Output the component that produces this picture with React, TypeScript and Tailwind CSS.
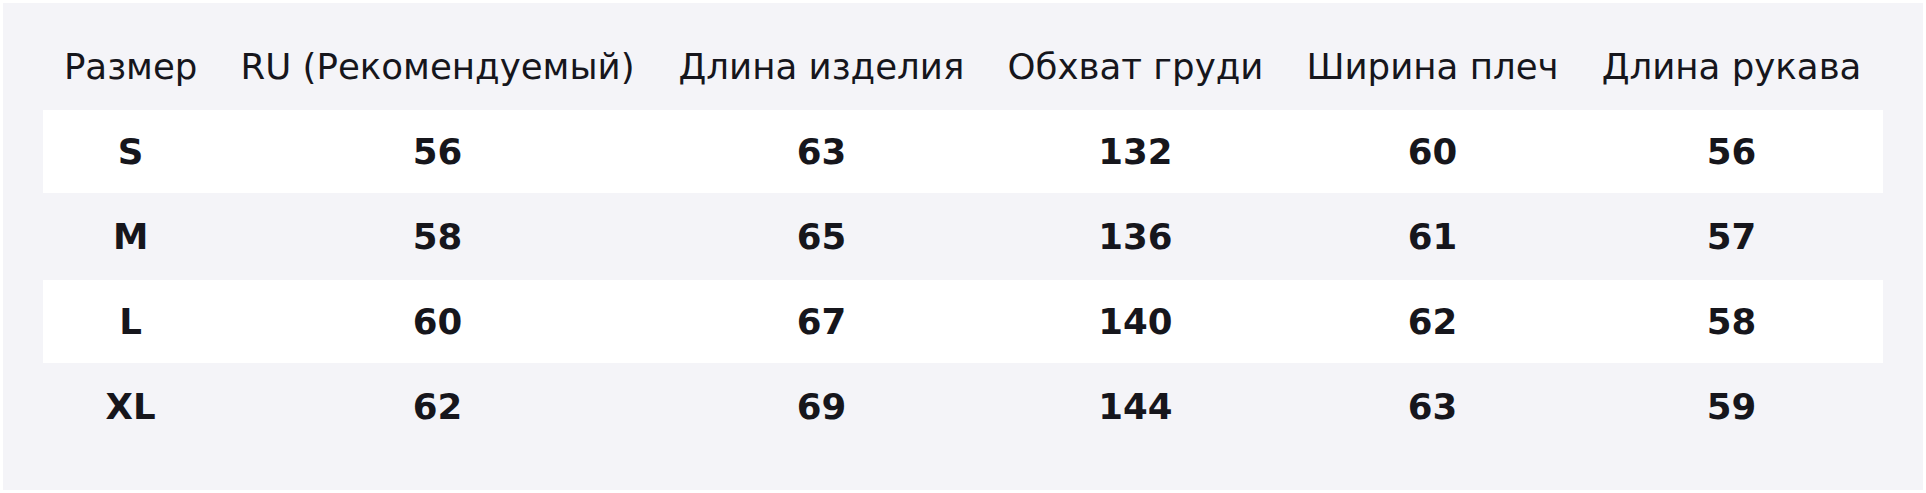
const headers = [
  "Размер",
  "RU (Рекомендуемый)",
  "Длина изделия",
  "Обхват груди",
  "Ширина плеч",
  "Длина рукава",
];

const rows: (string | number)[][] = [
  ["S", 56, 63, 132, 60, 56],
  ["M", 58, 65, 136, 61, 57],
  ["L", 60, 67, 140, 62, 58],
  ["XL", 62, 69, 144, 63, 59],
];

export default function App() {
  return (
    <div className="bg-white p-[3px] w-[1926px] h-[493px]" style={{ fontFamily: '"DejaVu Sans", Verdana, sans-serif' }}>
      <div className="bg-[#f4f4f8] h-[487px] px-10 pt-10">
        <table className="w-full border-separate border-spacing-x-0 border-spacing-y-[2px] text-[#16161c] text-[35.6px] leading-[43px]">
          <thead>
            <tr>
              {headers.map((h) => (
                <th key={h} className="font-normal text-center whitespace-nowrap px-[20px] pt-0 pb-5">
                  {h}
                </th>
              ))}
            </tr>
          </thead>
          <tbody>
            {rows.map((row, i) => (
              <tr key={row[0]} className={i % 2 === 0 ? "bg-white" : ""}>
                {row.map((cell, j) => (
                  <td key={j} className="font-bold text-center whitespace-nowrap px-[20px] py-5">
                    {cell}
                  </td>
                ))}
              </tr>
            ))}
          </tbody>
        </table>
      </div>
    </div>
  );
}
